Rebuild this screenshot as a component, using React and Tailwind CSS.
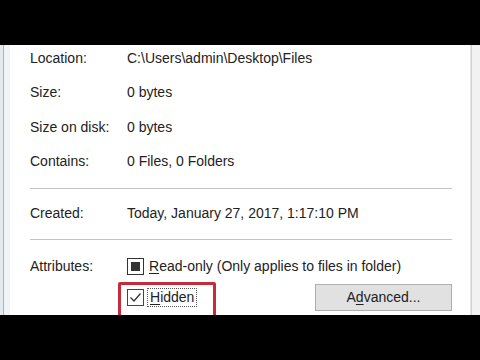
import React from "react";

const rows = [
  ["Location:", "C:\\Users\\admin\\Desktop\\Files"],
  ["Size:", "0 bytes"],
  ["Size on disk:", "0 bytes"],
  ["Contains:", "0 Files, 0 Folders"],
];

function Row({ label, children }) {
  return (
    <div className="flex items-center h-[26px]">
      <div className="w-[97px] shrink-0">{label}</div>
      <div className="flex-1 flex items-center">{children}</div>
    </div>
  );
}

export default function App() {
  return (
    <div className="w-[480px] h-[360px] bg-black flex flex-col">
      <div className="h-[45px] shrink-0" />
      <div
        className="h-[270px] flex bg-white overflow-hidden text-[14px] text-[#222]"
        style={{ fontFamily: '"Liberation Sans", Arial, sans-serif' }}
      >
        {/* left window frame */}
        <div className="w-[10px] shrink-0 flex">
          <div className="w-[3px] bg-[#e3ebf0]" />
          <div className="w-px bg-[#a3b6c4]" />
          <div className="flex-1 bg-[#f1f4f6]" />
        </div>

        <div className="flex-1 pl-[20px] pr-[18px] flex flex-col">
          <div className="flex flex-col gap-[8.5px]">
            {rows.map(([label, value]) => (
              <Row key={label} label={label}>
                {value}
              </Row>
            ))}
          </div>

          <div className="mt-[13px] h-px bg-[#c4c4c4]" />

          <div className="mt-[12px]">
            <Row label="Created:">Today, January 27, 2017, 1:17:10 PM</Row>
          </div>

          <div className="mt-[12.5px] h-px bg-[#c4c4c4]" />

          <div className="mt-[13px]">
            <Row label="Attributes:">
              <div className="w-[17px] h-[17px] border border-[#333] flex items-center justify-center bg-white">
                <div className="w-[9px] h-[9px] bg-[#333]" />
              </div>
              <span className="ml-[5px]">
                <span className="underline underline-offset-2">R</span>ead-only (Only applies to files in folder)
              </span>
            </Row>
          </div>

          <div className="mt-[5px] flex items-center h-[27px]">
            <div className="w-[97px] shrink-0" />
            <div className="relative flex items-center">
              {/* red annotation box */}
              <div className="absolute left-[-9px] top-[-6px] w-[98px] h-[44px] border-[3px] border-[#c62b3b] rounded-[2px]" />
              <div className="w-[17px] h-[17px] border border-[#444] bg-white flex items-center justify-center">
                <svg width="13" height="13" viewBox="0 0 13 13">
                  <path d="M1.5 6.5 L5 10 L11.5 2.5" fill="none" stroke="#333" strokeWidth="1.3" />
                </svg>
              </div>
              <span className="ml-[3px] px-[2px] border border-dotted border-[#555] leading-[17px]">
                <span className="underline underline-offset-2">H</span>idden
              </span>
            </div>
            <div className="flex-1" />
            <div className="w-[137px] h-[27px] bg-[#e1e1e1] border border-[#adadad] flex items-center justify-center">
              A<span className="underline underline-offset-2">d</span>vanced...
            </div>
          </div>
        </div>

        {/* right window frame */}
        <div className="w-[10px] shrink-0 flex">
          <div className="w-px bg-[#e6e6e6]" />
          <div className="w-px bg-[#d2d2d2]" />
          <div className="flex-1 bg-[#f2f2f2]" />
        </div>
      </div>
      <div className="flex-1" />
    </div>
  );
}
